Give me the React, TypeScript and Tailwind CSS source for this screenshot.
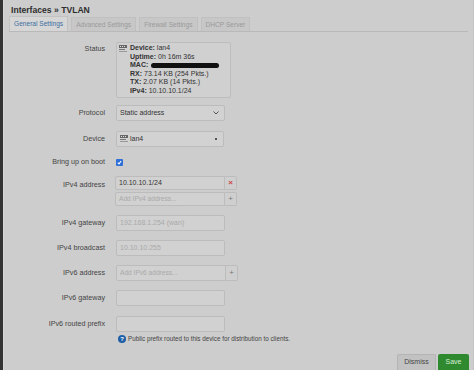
import React from "react";

const font = { fontFamily: '"Liberation Sans", Arial, sans-serif' };

function Label({ children }: { children: React.ReactNode }) {
    return (
        <div className="w-[112px] shrink-0 text-right pr-[11px] text-[7.2px] text-[#444]">
            {children}
        </div>
    );
}

function TextBox({ value, placeholder }: { value?: string; placeholder?: string }) {
    return (
        <div className="w-[109px] h-[16px] border border-[#bcbcbc] rounded-[2px] bg-[#d1d1d1] px-[3px] flex items-center text-[7px]">
            {value ? (
                <span className="text-[#333]">{value}</span>
            ) : (
                <span className="text-[#a9a9a9]">{placeholder}</span>
            )}
        </div>
    );
}

function AddBox({ placeholder, h }: { placeholder: string; h: string }) {
    return (
        <div className="flex">
            <div className={`w-[110px] ${h} border border-[#bcbcbc] rounded-l-[2px] bg-[#d1d1d1] px-[3px] flex items-center text-[6.6px] text-[#a9a9a9]`}>
                {placeholder}
            </div>
            <div className={`w-[12px] ${h} border border-l-0 border-[#bcbcbc] rounded-r-[2px] bg-[#cfcfcf] flex items-center justify-center text-[8px] text-[#777]`}>
                +
            </div>
        </div>
    );
}

function DevIcon() {
    return (
        <svg width="8" height="8" viewBox="0 0 8 8" className="shrink-0">
            <rect x="0" y="0" width="8" height="3" fill="#666" />
            <rect x="1" y="1" width="1" height="1" fill="#ddd" />
            <rect x="3" y="1" width="1" height="1" fill="#ddd" />
            <rect x="5" y="1" width="1" height="1" fill="#ddd" />
            <rect x="0" y="4" width="6" height="1" fill="#777" />
            <rect x="0" y="6" width="8" height="1" fill="#999" />
        </svg>
    );
}

export default function App() {
    const tabs = ["General Settings", "Advanced Settings", "Firewall Settings", "DHCP Server"];
    return (
        <div className="w-[474px] h-[370px] flex overflow-hidden bg-[#cdcdcd]" style={font}>
            {/* page behind the modal */}
            <div className="w-[3px] bg-[#333]" />
            <div className="flex-1 flex flex-col border-l border-[#d6d6d6] border-r border-r-[#c4c4c4] bg-[#cdcdcd]">
                <div className="pl-[7px] pt-[5px] text-[8.6px] font-bold text-[#2e2e2e] h-[17px] leading-[10px]">
                    Interfaces » TVLAN
                </div>

                {/* Tabs */}
                <div className="mx-[5px] flex gap-[3px] border-b border-[#b9b9b9] h-[15px] items-end">
                    {tabs.map((t, i) => (
                        <div
                            key={t}
                            className={
                                i === 0
                                    ? "px-[4px] h-[15px] flex items-center text-[6.6px] text-[#3c6e9f] bg-[#d6d6d6] border border-b-0 border-[#c2c2c2]"
                                    : "px-[4px] h-[14px] flex items-center text-[6.6px] text-[#9a9a9a] bg-[#c7c7c7] border border-b-0 border-[#c0c0c0]"
                            }
                        >
                            {t}
                        </div>
                    ))}
                </div>

                {/* Form */}
                <div className="flex flex-col">
                    <div className="flex mt-[10px]">
                        <Label>
                            <div className="pt-[2px]">Status</div>
                        </Label>
                        <div className="w-[115px] h-[56px] border border-[#bdbdbd] rounded-[2px] bg-[#d0d0d0] px-[2px] pt-[1px] flex gap-[3px] text-[7px] leading-[8.6px] text-[#333]">
                            <div className="pt-[1px]">
                                <DevIcon />
                            </div>
                            <div>
                                <div><b>Device:</b> lan4</div>
                                <div><b>Uptime:</b> 0h 16m 36s</div>
                                <div className="flex items-center">
                                    <b>MAC:</b>
                                    <span className="ml-[3px] w-[68px] h-[5px] rounded-full bg-[#111]" />
                                </div>
                                <div><b>RX:</b> 73.14 KB (254 Pkts.)</div>
                                <div><b>TX:</b> 2.07 KB (14 Pkts.)</div>
                                <div><b>IPv4:</b> 10.10.10.1/24</div>
                            </div>
                        </div>
                    </div>

                    <div className="flex items-center mt-[7px] h-[16px]">
                        <Label>Protocol</Label>
                        <div className="w-[109px] h-[16px] border border-[#bcbcbc] rounded-[2px] bg-[#d2d2d2] px-[3px] flex items-center justify-between text-[7px] text-[#333]">
                            <span>Static address</span>
                            <svg width="6" height="4" viewBox="0 0 6 4" className="mr-[2px]">
                                <path d="M0.5 0.5 L3 3 L5.5 0.5" stroke="#555" strokeWidth="1" fill="none" />
                            </svg>
                        </div>
                    </div>

                    <div className="flex items-center mt-[10px] h-[16px]">
                        <Label>Device</Label>
                        <div className="w-[108px] h-[16px] border border-[#bcbcbc] rounded-[2px] bg-[#d2d2d2] px-[3px] flex items-center justify-between text-[7px] text-[#333]">
                            <span className="flex items-center gap-[2px]">
                                <DevIcon />
                                lan4
                            </span>
                            <span className="w-[2px] h-[2px] bg-[#555] mr-[3px]" />
                        </div>
                    </div>

                    <div className="flex items-center mt-[10px] h-[10px]">
                        <Label>Bring up on boot</Label>
                        <div className="w-[7px] h-[7px] rounded-[1px] bg-[#2f6fd6] flex items-center justify-center">
                            <svg width="5" height="5" viewBox="0 0 5 5">
                                <path d="M0.8 2.6 L2 3.8 L4.2 1" stroke="#fff" strokeWidth="1.1" fill="none" />
                            </svg>
                        </div>
                    </div>

                    <div className="flex mt-[9px]">
                        <Label>
                            <div className="pt-[4px]">IPv4 address</div>
                        </Label>
                        <div className="flex flex-col gap-[2px] -ml-[1px]">
                            <div className="flex">
                                <div className="w-[110px] h-[14px] border border-[#bcbcbc] rounded-l-[2px] bg-[#d1d1d1] px-[3px] flex items-center text-[7px] text-[#333]">
                                    10.10.10.1/24
                                </div>
                                <div className="w-[12px] h-[14px] border border-l-0 border-[#bcbcbc] rounded-r-[2px] bg-[#cfcfcf] flex items-center justify-center text-[8px] font-bold text-[#c44]">
                                    ×
                                </div>
                            </div>
                            <AddBox placeholder="Add IPv4 address..." h="h-[14px]" />
                        </div>
                    </div>

                    <div className="flex items-center mt-[9px] h-[16px]">
                        <Label>IPv4 gateway</Label>
                        <TextBox placeholder="192.168.1.254 (wan)" />
                    </div>

                    <div className="flex items-center mt-[9px] h-[16px]">
                        <Label>IPv4 broadcast</Label>
                        <TextBox placeholder="10.10.10.255" />
                    </div>

                    <div className="flex items-center mt-[9px] h-[16px]">
                        <Label>IPv6 address</Label>
                        <AddBox placeholder="Add IPv6 address..." h="h-[16px]" />
                    </div>

                    <div className="flex items-center mt-[9px] h-[16px]">
                        <Label>IPv6 gateway</Label>
                        <TextBox />
                    </div>

                    <div className="flex items-center mt-[10px] h-[16px]">
                        <Label>IPv6 routed prefix</Label>
                        <TextBox />
                    </div>

                    <div className="flex items-center mt-[2px] ml-[114px] gap-[2px] text-[6.3px] text-[#444] whitespace-nowrap">
                        <span className="w-[8px] h-[8px] rounded-full bg-[#1f5fa8] text-white text-[6px] font-bold flex items-center justify-center leading-none">
                            ?
                        </span>
                        Public prefix routed to this device for distribution to clients.
                    </div>
                </div>

                <div className="flex-1" />
                <div className="flex justify-end gap-[2px] pr-[4px]">
                    <div className="w-[39px] h-[16px] rounded-t-[2px] bg-[#c2c2c2] border border-b-0 border-[#b4b4b4] flex items-center justify-center text-[7px] text-[#444]">
                        Dismiss
                    </div>
                    <div className="w-[31px] h-[16px] rounded-t-[2px] bg-[#2f8a2f] flex items-center justify-center text-[7px] text-[#d8ecd8]">
                        Save
                    </div>
                </div>
            </div>
        </div>
    );
}
